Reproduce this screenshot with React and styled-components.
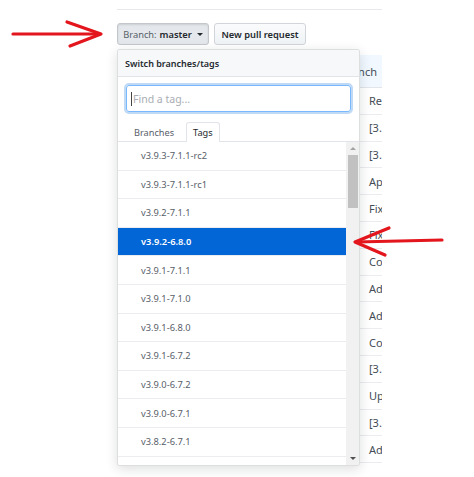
import React from 'react';
import styled, { createGlobalStyle } from 'styled-components';

const GlobalStyle = createGlobalStyle`
  html, body {
    margin: 0;
    background: #fff;
  }
  body {
    font-family: "Noto Sans", "Open Sans", sans-serif;
    color: #24292e;
  }
`;

const Page = styled.div`
  position: relative;
  width: 474px;
  height: 477px;
  overflow: hidden;
`;

const Repo = styled.div`
  margin-left: 117px;
  width: 265px;
  padding-top: 9px;
`;

const Rule = styled.div`
  height: 1px;
  background: #e6e8eb;
`;

const Toolbar = styled.div`
  display: flex;
  gap: 5px;
  margin-top: 13px;
`;

const Button = styled.div`
  box-sizing: border-box;
  width: 92px;
  height: 22px;
  display: flex;
  align-items: center;
  justify-content: center;
  gap: 3px;
  font-size: 9.3px;
  font-weight: 600;
  white-space: nowrap;
  border-radius: 3px;
  border: 1px solid ${p => (p.pressed ? '#c3c7cb' : '#d1d5da')};
  background: ${p => (p.pressed ? '#e4e8ec' : 'linear-gradient(#fafbfc, #eff3f6)')};
  box-shadow: ${p => (p.pressed ? 'inset 0 1px 2px rgba(27,31,35,.12)' : 'none')};
`;

const Muted = styled.span`
  color: #586069;
  font-weight: 400;
`;

const Caret = styled.span`
  width: 0;
  height: 0;
  border-left: 3px solid transparent;
  border-right: 3px solid transparent;
  border-top: 3.5px solid #24292e;
  margin-left: 2px;
`;

const Body = styled.div`
  position: relative;
  margin-top: 10px;
`;

const Table = styled.div`
  overflow: hidden;
`;

const TableHead = styled.div`
  height: 33px;
  display: flex;
  align-items: center;
  justify-content: flex-end;
  padding-right: 5px;
  background: #f1f8ff;
  border-bottom: 1px solid #e1e4e8;
  box-sizing: border-box;
  font-size: 11px;
  color: #444d56;
`;

const TableRow = styled.div`
  box-sizing: border-box;
  height: 26.8px;
  display: flex;
  align-items: center;
  padding-left: 252px;
  border-bottom: 1px solid #eaecef;
  font-size: 11px;
  color: #444d56;
  white-space: nowrap;
`;

const Dropdown = styled.div`
  position: absolute;
  top: -6px;
  left: 0;
  width: 243px;
  height: 417px;
  box-sizing: border-box;
  display: flex;
  flex-direction: column;
  background: #fff;
  border: 1px solid rgba(27, 31, 35, 0.15);
  border-radius: 3px;
  box-shadow: 0 3px 12px rgba(27, 31, 35, 0.15);
  overflow: hidden;
`;

const MenuHeader = styled.div`
  height: 26px;
  display: flex;
  align-items: center;
  padding-left: 7px;
  font-size: 9px;
  font-weight: 600;
  color: #24292e;
  background: #f6f8fa;
  border-bottom: 1px solid #e1e4e8;
`;

const Filter = styled.div`
  padding: 8px 8px 0 8px;
`;

const Field = styled.div`
  box-sizing: border-box;
  height: 27px;
  display: flex;
  align-items: center;
  padding-left: 4px;
  gap: 1px;
  border: 1px solid #79b8ff;
  border-radius: 3px;
  box-shadow: 0 0 0 2px rgba(3, 102, 214, 0.25);
  font-size: 10.5px;
  color: #a8adb3;
`;

const TextCursor = styled.span`
  width: 1px;
  height: 14px;
  background: #444;
`;

const Tabs = styled.div`
  display: flex;
  gap: 5px;
  margin-top: 10px;
  padding-left: 9px;
  height: 19px;
  border-bottom: 1px solid #e1e4e8;
`;

const Tab = styled.div`
  box-sizing: border-box;
  height: ${p => (p.active ? '20px' : '19px')};
  padding: 0 6px;
  display: flex;
  align-items: center;
  font-size: 9.2px;
  color: ${p => (p.active ? '#24292e' : '#586069')};
  background: #fff;
  border: 1px solid ${p => (p.active ? '#e1e4e8' : 'transparent')};
  border-bottom: none;
  border-radius: 3px 3px 0 0;
`;

const ListArea = styled.div`
  flex: 1;
  display: flex;
  min-height: 0;
`;

const List = styled.div`
  flex: 1;
  overflow: hidden;
`;

const Item = styled.div`
  box-sizing: border-box;
  height: 28.6px;
  display: flex;
  align-items: center;
  padding-left: 23px;
  font-size: 9.3px;
  border-bottom: 1px solid #eaecef;
  color: ${p => (p.selected ? '#fff' : '#586069')};
  font-weight: ${p => (p.selected ? 600 : 400)};
  background: ${p => (p.selected ? '#0366d6' : '#fff')};
`;

const Scrollbar = styled.div`
  width: 13px;
  display: flex;
  flex-direction: column;
  align-items: center;
  background: #f1f1f1;
`;

const ScrollArrow = styled.div`
  height: 13px;
  display: flex;
  align-items: center;
  justify-content: center;
  &::after {
    content: '';
    border-left: 3px solid transparent;
    border-right: 3px solid transparent;
    ${p => (p.down ? 'border-top: 3px solid #505050;' : 'border-bottom: 3px solid #a3a3a3;')}
  }
`;

const Thumb = styled.div`
  width: 10px;
  height: 53px;
  background: #c1c1c1;
`;

const Spacer = styled.div`
  flex: 1;
`;

const Annotation = styled.svg`
  position: absolute;
  left: 0;
  top: 0;
  pointer-events: none;
`;

const tags = [
  'v3.9.3-7.1.1-rc2',
  'v3.9.3-7.1.1-rc1',
  'v3.9.2-7.1.1',
  'v3.9.2-6.8.0',
  'v3.9.1-7.1.1',
  'v3.9.1-7.1.0',
  'v3.9.1-6.8.0',
  'v3.9.1-6.7.2',
  'v3.9.0-6.7.2',
  'v3.9.0-6.7.1',
  'v3.8.2-6.7.1',
  'v3.8.2-6.7.0',
];

const commits = [
  'Re',
  '[3.',
  '[3.',
  'Ap',
  'Fix',
  'Fix',
  'Co',
  'Ad',
  'Ad',
  'Co',
  '[3.',
  'Up',
  '[3.',
  'Ad',
];

export default function App() {
  return (
    <Page>
      <GlobalStyle />
      <Repo>
        <Rule />
        <Toolbar>
          <Button pressed>
            <Muted>Branch:</Muted> master <Caret />
          </Button>
          <Button>New pull request</Button>
        </Toolbar>
        <Body>
          <Table>
            <TableHead>Branch</TableHead>
            {commits.map((c, i) => (
              <TableRow key={i}>{c}</TableRow>
            ))}
          </Table>
          <Dropdown>
            <MenuHeader>Switch branches/tags</MenuHeader>
            <Filter>
              <Field>
                <TextCursor />
                Find a tag...
              </Field>
            </Filter>
            <Tabs>
              <Tab>Branches</Tab>
              <Tab active>Tags</Tab>
            </Tabs>
            <ListArea>
              <List>
                {tags.map(t => (
                  <Item key={t} selected={t === 'v3.9.2-6.8.0'}>{t}</Item>
                ))}
              </List>
              <Scrollbar>
                <ScrollArrow />
                <Thumb />
                <Spacer />
                <ScrollArrow down />
              </Scrollbar>
            </ListArea>
          </Dropdown>
        </Body>
      </Repo>
      <Annotation width="474" height="477">
        <g stroke="#e3161d" strokeWidth="3.2" strokeLinecap="round" strokeLinejoin="round" fill="none">
          <path d="M13 34 L99 34" />
          <path d="M67 22 L101 34 L70 46" />
          <path d="M356 242 L442 240" />
          <path d="M389 228 L355 242 L385 255" />
        </g>
      </Annotation>
    </Page>
  );
}
